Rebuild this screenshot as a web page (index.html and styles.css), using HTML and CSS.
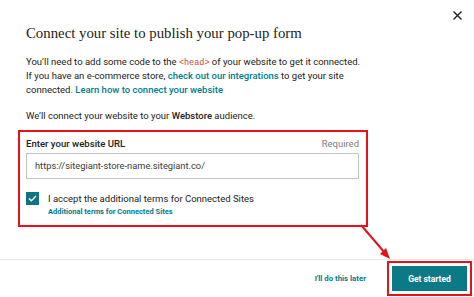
FILE: index.html
```html
<!DOCTYPE html>
<html>
<head>
<meta charset="utf-8">
<link rel="stylesheet" href="styles.css">
</head>
<body>
<div class="modal">
  <button class="close" aria-label="Close">
    <svg width="9" height="9" viewBox="0 0 9 9"><path d="M0.5 0.5L8.5 8.5M8.5 0.5L0.5 8.5" stroke="#241c15" stroke-width="1.4"/></svg>
  </button>
  <div class="content">
    <h1 class="title">Connect your site to publish your pop-up form</h1>
    <p class="intro">You’ll need to add some code to the <code class="code">&lt;head&gt;</code> of your website to get it connected.<br>If you have an e-commerce store, <a class="link">check out our integrations</a> to get your site<br>connected. <a class="link">Learn how to connect your website</a></p>
    <p class="audience">We’ll connect your website to your <strong>Webstore</strong> audience.</p>
    <div class="highlight">
      <div class="label-row">
        <span class="label">Enter your website URL</span>
        <span class="required">Required</span>
      </div>
      <div class="input">https://sitegiant-store-name.sitegiant.co/</div>
      <div class="check-row">
        <span class="checkbox">
          <svg width="9" height="7" viewBox="0 0 9 7"><path d="M1 3.5L3.4 5.8L8 1" fill="none" stroke="#fff" stroke-width="1.3"/></svg>
        </span>
        <div class="check-text">
          <div class="accept">I accept the additional terms for Connected Sites</div>
          <a class="terms">Additional terms for Connected Sites</a>
        </div>
      </div>
    </div>
  </div>
  <div class="footer">
    <a class="later">I'll do this later</a>
    <span class="btn-frame"><button class="btn">Get started</button></span>
  </div>
  <svg class="arrow" width="474" height="297" viewBox="0 0 474 297">
    <line x1="361" y1="225" x2="385" y2="253" stroke="#e3121b" stroke-width="2"/>
    <path d="M390 259L380 254L386 248Z" fill="#e3121b"/>
  </svg>
</div>
</body>
</html>
```

FILE: styles.css
```css
html, body {
  margin: 0;
  padding: 0;
  background: #fff;
}
body {
  font-family: "Roboto", "Liberation Sans", sans-serif;
  color: #241c15;
  width: 474px;
  height: 297px;
  overflow: hidden;
}
.modal {
  position: relative;
  width: 474px;
  height: 297px;
}
.close {
  position: absolute;
  top: 11px;
  right: 12px;
  border: 0;
  background: none;
  padding: 0;
  width: 9px;
  height: 9px;
  display: flex;
}
.content {
  padding: 23px 0 0 26px;
}
.title {
  margin: 0;
  font-family: "Liberation Serif", serif;
  font-weight: normal;
  font-size: 14.8px;
  line-height: 20px;
  color: #241c15;
}
.intro {
  margin: 12px 0 0;
  font-size: 9.5px;
  line-height: 14px;
  white-space: nowrap;
}
.code {
  font-family: "Liberation Mono", monospace;
  font-size: 8.5px;
  line-height: 10px;
  color: #c94a2a;
}
.link {
  color: #007c89;
  font-weight: 500;
}
.audience {
  margin: 12px 0 0;
  font-size: 9.5px;
  line-height: 14px;
}
.audience strong {
  font-weight: 500;
}
.highlight {
  margin: 7px 0 0 -8px;
  width: 333px;
  border: 2px solid #e3121b;
  padding: 5px 7px 6px 6px;
}
.label-row {
  display: flex;
  justify-content: space-between;
  align-items: center;
  font-size: 9.6px;
  line-height: 14px;
}
.label {
  font-weight: 500;
}
.required {
  color: #7d7d7d;
  font-size: 9.5px;
}
.input {
  margin-top: 2px;
  height: 24px;
  border: 1px solid #c4c4c4;
  font-size: 9.3px;
  line-height: 24px;
  padding-left: 8px;
  color: #3a3a3a;
}
.check-row {
  display: flex;
  gap: 9px;
  margin-top: 13px;
}
.checkbox {
  width: 13px;
  height: 13px;
  background: #0f7480;
  display: flex;
  align-items: center;
  justify-content: center;
  flex-shrink: 0;
}
.check-text {
  display: flex;
  flex-direction: column;
}
.accept {
  font-size: 9.5px;
  line-height: 13px;
}
.terms {
  font-size: 7.5px;
  line-height: 14px;
  color: #007c89;
  font-weight: 700;
}
.footer {
  position: absolute;
  left: 0;
  right: 0;
  bottom: 0;
  height: 37px;
  border-top: 1px solid #e6e6e6;
  display: flex;
  align-items: center;
  justify-content: flex-end;
  padding-right: 2px;
  gap: 21px;
}
.later {
  color: #007c89;
  font-weight: 700;
  font-size: 7.8px;
}
.btn-frame {
  border: 2px solid #e3121b;
  padding: 3px;
  display: flex;
}
.btn {
  width: 75px;
  height: 25px;
  border: 0;
  background: #0c7a86;
  color: #fff;
  font-family: "Roboto", "Liberation Sans", sans-serif;
  font-weight: 700;
  font-size: 8.5px;
  padding: 0;
}
.arrow {
  position: absolute;
  left: 0;
  top: 0;
  pointer-events: none;
}
```
